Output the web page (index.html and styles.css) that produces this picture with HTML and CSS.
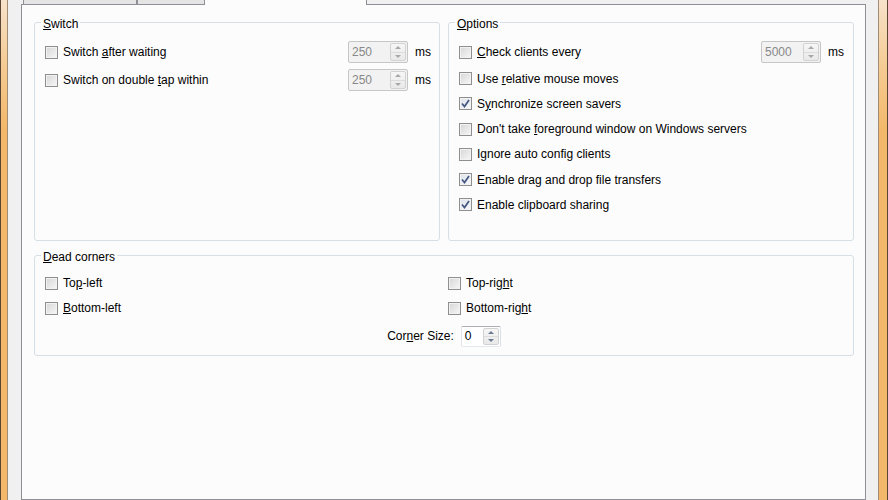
FILE: index.html
```html
<!DOCTYPE html>
<html lang="en">
<head>
    <meta charset="UTF-8">
    <title>Settings</title>
    <link rel="stylesheet" href="styles.css">
</head>
<body>
    <div class="frame">
        <div class="client">
            <div class="tabs">
                <div class="edge"></div>
                <div class="tab first"></div>
                <div class="tab second"></div>
                <div class="tab active"></div>
                <div class="rest"></div>
            </div>
            <div class="pane">
                <div class="top-groups">
                    <fieldset class="group switch">
                        <legend><u>S</u>witch</legend>
                        <div class="row spin-row">
                            <span class="cb"></span>
                            <span class="label">Switch <u>a</u>fter waiting</span>
                            <div class="spin disabled">
                                <span class="val">250</span>
                                <span class="arrows"><i class="up"></i><i class="down"></i></span>
                            </div>
                            <span class="unit">ms</span>
                        </div>
                        <div class="row spin-row">
                            <span class="cb"></span>
                            <span class="label">Switch on double <u>t</u>ap within</span>
                            <div class="spin disabled">
                                <span class="val">250</span>
                                <span class="arrows"><i class="up"></i><i class="down"></i></span>
                            </div>
                            <span class="unit">ms</span>
                        </div>
                    </fieldset>
                    <fieldset class="group options">
                        <legend><u>O</u>ptions</legend>
                        <div class="row spin-row">
                            <span class="cb"></span>
                            <span class="label"><u>C</u>heck clients every</span>
                            <div class="spin disabled">
                                <span class="val">5000</span>
                                <span class="arrows"><i class="up"></i><i class="down"></i></span>
                            </div>
                            <span class="unit">ms</span>
                        </div>
                        <div class="row">
                            <span class="cb"></span>
                            <span class="label">Use <u>r</u>elative mouse moves</span>
                        </div>
                        <div class="row">
                            <span class="cb checked"><svg width="11" height="11" viewBox="0 0 11 11"><path d="M2 5.5 L4.5 8.5 L9 2" fill="none" stroke="#44557f" stroke-width="1.7"/></svg></span>
                            <span class="label">S<u>y</u>nchronize screen savers</span>
                        </div>
                        <div class="row">
                            <span class="cb"></span>
                            <span class="label">Don't take <u>f</u>oreground window on Windows servers</span>
                        </div>
                        <div class="row">
                            <span class="cb"></span>
                            <span class="label">Ignore auto config clients</span>
                        </div>
                        <div class="row">
                            <span class="cb checked"><svg width="11" height="11" viewBox="0 0 11 11"><path d="M2 5.5 L4.5 8.5 L9 2" fill="none" stroke="#44557f" stroke-width="1.7"/></svg></span>
                            <span class="label">Enable drag and drop file transfers</span>
                        </div>
                        <div class="row">
                            <span class="cb checked"><svg width="11" height="11" viewBox="0 0 11 11"><path d="M2 5.5 L4.5 8.5 L9 2" fill="none" stroke="#44557f" stroke-width="1.7"/></svg></span>
                            <span class="label">Enable clipboard sharing</span>
                        </div>
                    </fieldset>
                </div>
                <fieldset class="group corners">
                    <legend><u>D</u>ead corners</legend>
                    <div class="corner-grid">
                        <div class="row">
                            <span class="cb"></span>
                            <span class="label">To<u>p</u>-left</span>
                        </div>
                        <div class="row">
                            <span class="cb"></span>
                            <span class="label">Top-rig<u>h</u>t</span>
                        </div>
                        <div class="row">
                            <span class="cb"></span>
                            <span class="label"><u>B</u>ottom-left</span>
                        </div>
                        <div class="row">
                            <span class="cb"></span>
                            <span class="label">Bottom-rig<u>h</u>t</span>
                        </div>
                        <div class="corner-size">
                            <span>Cor<u>n</u>er Size:</span>
                            <div class="spin small">
                                <span class="val">0</span>
                                <span class="arrows"><i class="up"></i><i class="down"></i></span>
                            </div>
                        </div>
                    </div>
                </fieldset>
            </div>
        </div>
    </div>
</body>
</html>
```

FILE: styles.css
```css
* {
    margin: 0;
    padding: 0;
    box-sizing: border-box;
}

body {
    width: 888px;
    height: 500px;
    overflow: hidden;
    font-family: "Liberation Sans", Arial, sans-serif;
    font-size: 12px;
    color: #000;
}

.frame {
    height: 500px;
    border-left: 1px solid #5a4632;
    border-right: 1px solid #5a4632;
    padding: 0 8px 0 6px;
    background: linear-gradient(to bottom, #f7e2ca 0, #f5cd98 60px, #f3b86a 130px, #f3b86a 100%);
}

.client {
    height: 100%;
    border-left: 1px solid #a08c74;
    border-right: 1px solid #a08c74;
    background: #f0f0f0;
    padding: 0 12px 0 13px;
    display: flex;
    flex-direction: column;
}

.tabs {
    display: flex;
    height: 5px;
}

.tabs > div {
    height: 5px;
}

.edge {
    width: 2px;
    border-bottom: 1px solid #8e9095;
}

.tab {
    border-left: 1px solid #8e9095;
    border-right: 1px solid #8e9095;
    border-bottom: 1px solid #8e9095;
    background: #e4e4e4;
}

.tab.first {
    width: 114px;
}

.tab.second {
    width: 68px;
}

.tab.active {
    width: 162px;
    border-bottom: none;
    border-left: none;
    background: #fcfcfc;
}

.rest {
    flex: 1;
    border-bottom: 1px solid #8e9095;
}

.pane {
    flex: 1;
    background: #fcfcfc;
    border: 1px solid #8e9095;
    border-top: none;
    padding: 8px 11px 0 12px;
}

.top-groups {
    display: grid;
    grid-template-columns: 1fr 1fr;
    column-gap: 8px;
}

.group {
    border: 1px solid #d5dfe5;
    border-radius: 3px;
    padding: 6px 8px 22px 10px;
    min-width: 0;
}

.group.options {
    padding-right: 9px;
}

.group legend {
    padding: 4px 2px 0;
    margin-left: -4px;
    line-height: 15px;
}

.row {
    display: flex;
    align-items: center;
    height: 25px;
}

.row.spin-row {
    height: 28px;
}

.options .row {
    height: 25.25px;
}

.options .row.spin-row {
    height: 28px;
}

.label {
    flex: 1;
    white-space: nowrap;
}

.cb {
    width: 13px;
    height: 13px;
    margin-right: 5px;
    border: 1px solid #8f8f8f;
    background: linear-gradient(135deg, #d6d6d6, #f7f7f7);
    box-shadow: inset 0 0 0 1px #f2f2f2;
    display: flex;
    align-items: center;
    justify-content: center;
    flex-shrink: 0;
}

.cb.checked {
    background: linear-gradient(135deg, #dde3ea, #f7f8fa);
}

.spin {
    display: flex;
    width: 60px;
    height: 22px;
    border: 1px solid #c6c6c6;
    background: #f2f2f2;
    border-radius: 2px;
}

.spin .val {
    flex: 1;
    padding-left: 3px;
    line-height: 20px;
    color: #888;
}

.arrows {
    width: 16px;
    margin: 1px;
    border: 1px solid #d2d2d2;
    border-radius: 2px;
    background: linear-gradient(to bottom, #f6f6f6, #e9e9e9);
    display: flex;
    flex-direction: column;
}

.arrows i {
    flex: 1;
    display: flex;
    align-items: center;
    justify-content: center;
}

.arrows i.up {
    border-bottom: 1px solid #dcdcdc;
}

.arrows i::before {
    content: "";
    border-left: 3px solid transparent;
    border-right: 3px solid transparent;
}

.arrows i.up::before {
    border-bottom: 3px solid #a8a8a8;
}

.arrows i.down::before {
    border-top: 3px solid #a8a8a8;
}

.unit {
    margin-left: 7px;
}

.corners {
    margin-top: 5px;
    padding: 6px 10px 3px 10px;
}

.corner-grid {
    display: grid;
    grid-template-columns: 1fr 1fr;
    column-gap: 8px;
}

.corner-size {
    grid-column: 1 / -1;
    height: 31px;
    display: flex;
    align-items: center;
    justify-content: center;
    gap: 7px;
}

.spin.small {
    width: 40px;
    height: 21px;
    background: #fff;
    border-color: #abadb3 #dbdfe6 #e3e9ef #e2e3ea;
}

.spin.small .val {
    color: #000;
    line-height: 19px;
}

.spin.small .arrows i.up::before {
    border-bottom-color: #6d7a93;
}

.spin.small .arrows i.down::before {
    border-top-color: #6d7a93;
}
```
